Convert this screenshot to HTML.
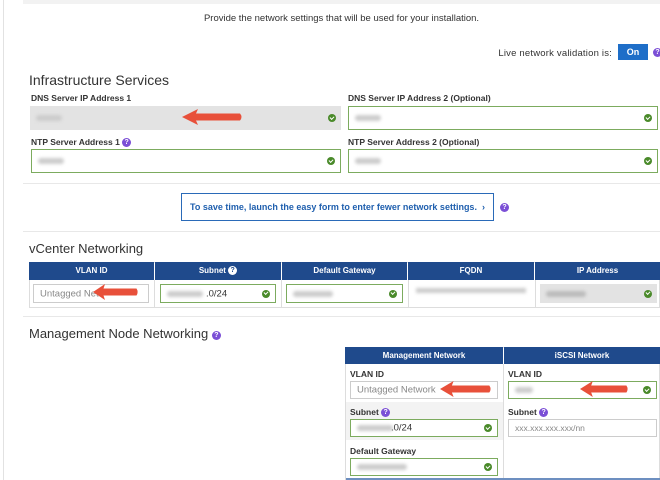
<!DOCTYPE html>
<html><head><meta charset="utf-8"><style>
*{margin:0;padding:0;box-sizing:border-box}
body{width:660px;height:480px;overflow:hidden;background:#fff;font-family:"Liberation Sans",sans-serif;color:#222;position:relative}
.a{position:absolute}
.lbl{position:absolute;font-size:8.5px;font-weight:bold;color:#333}
.inp{position:absolute;border:1px solid #7cab5e;background:#fff;height:22px}
.gray{background:#e3e3e3;border:none}
.ck{position:absolute;right:5px;top:50%;margin-top:-4px;width:8px;height:8px;border-radius:50%;background:#4a8a2a}
.ck:after{content:"";position:absolute;left:2px;top:1.5px;width:3px;height:2px;border-left:1.3px solid #fff;border-bottom:1.3px solid #fff;transform:rotate(-45deg)}
.blur{position:absolute;left:6px;top:50%;margin-top:-3px;height:6px;background:#ccc;border-radius:3px;filter:blur(1.5px)}
.q{display:inline-block;width:9px;height:9px;border-radius:50%;background:#7b4fd6;color:#fff;font-size:7px;font-weight:bold;text-align:center;line-height:9px;vertical-align:1px}
.hr{position:absolute;left:23px;right:0;height:1px;background:#e8e8e8}
.th{position:absolute;top:262px;height:18px;background:#1f4a8c;color:#fff;font-size:8px;font-weight:bold;text-align:center;line-height:18px}
.ph{position:absolute;left:6px;top:50%;transform:translateY(-50%);font-size:9.5px;color:#888}
</style></head><body>
<div class="a" style="left:3px;top:0;width:1px;height:480px;background:#e2e2e2"></div>
<div class="a" style="left:23px;top:0;right:0;height:4px;background:#f2f2f2"></div>
<div class="a" style="left:23px;right:0;top:13px;text-align:center;font-size:9.5px;color:#333">Provide the network settings that will be used for your installation.</div>
<div class="a" style="right:48px;top:48px;font-size:9.5px;color:#333;letter-spacing:0.2px">Live network validation is:</div>
<div class="a" style="left:618px;top:44px;width:30px;height:16px;background:#1e6ec8;color:#fff;font-size:9px;font-weight:bold;text-align:center;line-height:16px">On</div>
<div class="a q" style="left:653px;top:48px">?</div>
<div class="a" style="left:29px;top:72px;font-size:14px;color:#333">Infrastructure Services</div>
<div class="lbl" style="left:31px;top:93px">DNS Server IP Address 1</div>
<div class="inp gray" style="left:30px;top:106px;width:311px;height:24px"><div class="blur" style="width:26px"></div><div class="ck"></div></div>
<div class="lbl" style="left:348px;top:93px">DNS Server IP Address 2 (Optional)</div>
<div class="inp" style="left:348px;top:106px;width:310px;height:24px"><div class="blur" style="width:26px"></div><div class="ck"></div></div>
<div class="lbl" style="left:31px;top:137px">NTP Server Address 1 <span class="q">?</span></div>
<div class="inp" style="left:31px;top:149px;width:310px;height:24px"><div class="blur" style="width:26px"></div><div class="ck"></div></div>
<div class="lbl" style="left:348px;top:137px">NTP Server Address 2 (Optional)</div>
<div class="inp" style="left:348px;top:149px;width:310px;height:24px"><div class="blur" style="width:26px"></div><div class="ck"></div></div>
<div class="hr" style="top:183px"></div>
<div class="a" style="left:181px;top:193px;width:313px;height:28px;border:1px solid #2a6ab8;color:#1f5fae;font-size:9px;font-weight:bold;text-align:center;line-height:26px">To save time, launch the easy form to enter fewer network settings. &nbsp;›</div>
<div class="a q" style="left:500px;top:203px">?</div>
<div class="hr" style="top:231px"></div>
<div class="a" style="left:29px;top:241px;font-size:13px;color:#333">vCenter Networking</div>
<div class="a" style="left:29px;top:262px;right:0;height:46px;border:1px solid #ddd"></div>
<div class="th" style="left:29px;width:125px">VLAN ID</div>
<div class="th" style="left:155px;width:126px">Subnet <span class="q" style="background:#fff;color:#1f4a8c">?</span></div>
<div class="th" style="left:282px;width:125px">Default Gateway</div>
<div class="th" style="left:408px;width:126px">FQDN</div>
<div class="th" style="left:535px;width:125px">IP Address</div>
<div class="a" style="left:154px;top:280px;width:1px;height:28px;background:#ddd"></div>
<div class="a" style="left:281px;top:280px;width:1px;height:28px;background:#ddd"></div>
<div class="a" style="left:408px;top:280px;width:1px;height:28px;background:#ddd"></div>
<div class="a" style="left:535px;top:280px;width:1px;height:28px;background:#ddd"></div>
<div class="inp" style="left:33px;top:284px;width:116px;height:19px;border-color:#ccc"><span class="ph">Untagged Net</span></div>
<div class="inp" style="left:160px;top:284px;width:116px;height:19px"><div class="blur" style="width:36px"></div><span class="ph" style="left:45px;color:#333">.0/24</span><div class="ck"></div></div>
<div class="inp" style="left:286px;top:284px;width:117px;height:19px"><div class="blur" style="width:40px"></div><div class="ck"></div></div>
<div class="a" style="left:416px;top:288px;width:110px;height:5px;background:#ccc;filter:blur(1.5px)"></div>
<div class="inp gray" style="left:540px;top:284px;width:117px;height:19px"><div class="blur" style="width:40px;background:#bbb"></div><div class="ck"></div></div>
<div class="hr" style="top:316px"></div>
<div class="a" style="left:29px;top:326px;font-size:13px;color:#333">Management Node Networking <span class="q">?</span></div>
<div class="a" style="left:345px;top:347px;width:315px;height:133px;border:1px solid #ddd"></div>
<div class="th" style="left:345px;top:347px;width:158px;height:17px;line-height:17px">Management Network</div>
<div class="th" style="left:504px;top:347px;width:156px;height:17px;line-height:17px">iSCSI Network</div>
<div class="a" style="left:503px;top:364px;width:1px;height:116px;background:#ddd"></div>
<div class="a" style="left:346px;top:402px;width:157px;height:38px;background:#f3f3f3"></div>
<div class="a" style="left:346px;top:478px;width:314px;height:2px;background:#6d8fc0"></div>
<div class="lbl" style="left:350px;top:369px">VLAN ID</div>
<div class="inp" style="left:350px;top:381px;width:148px;height:18px;border-color:#ccc"><span class="ph">Untagged Network</span></div>
<div class="lbl" style="left:508px;top:369px">VLAN ID</div>
<div class="inp" style="left:508px;top:381px;width:149px;height:18px"><div class="blur" style="width:18px"></div><div class="ck"></div></div>
<div class="lbl" style="left:350px;top:407px">Subnet <span class="q">?</span></div>
<div class="inp" style="left:350px;top:419px;width:148px;height:18px"><div class="blur" style="width:36px"></div><span class="ph" style="left:40px;color:#333">.0/24</span><div class="ck"></div></div>
<div class="lbl" style="left:508px;top:407px">Subnet <span class="q">?</span></div>
<div class="inp" style="left:508px;top:419px;width:149px;height:18px;border-color:#ccc"><span class="ph" style="font-size:8.5px">xxx.xxx.xxx.xxx/nn</span></div>
<div class="lbl" style="left:350px;top:446px">Default Gateway</div>
<div class="inp" style="left:350px;top:458px;width:148px;height:18px"><div class="blur" style="width:50px"></div><div class="ck"></div></div>
<svg class="a" style="left:0;top:0" width="660" height="480">
<defs><g id="ar"><path d="M0 0 L16 -8 L14 -3.5 L58 -3.5 Q61 0 58 3.5 L14 3.5 L16 8 Z" fill="#e8503a"/></g></defs>
<use href="#ar" transform="translate(182,117)"/>
<use href="#ar" transform="translate(93,292) scale(0.75,1)"/>
<use href="#ar" transform="translate(440,389) scale(0.85,1)"/>
<use href="#ar" transform="translate(580,389) scale(0.8,1)"/>
</svg>
</body></html>
